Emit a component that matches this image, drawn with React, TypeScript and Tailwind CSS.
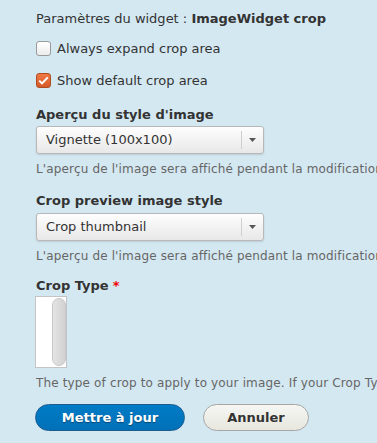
import React from 'react';

const Select: React.FC<{ value: string }> = ({ value }) => (
  <div className="flex h-[28px] w-[228px] items-center rounded-[3px] border border-[#b8b8b8] bg-gradient-to-b from-[#fefefe] to-[#e8e8e8] shadow-[0_1px_2px_rgba(0,0,0,0.12)]">
    <span className="flex-1 pl-[9px] text-[13px] text-[#333]">{value}</span>
    <span className="h-[18px] w-px bg-[#cfcfcf]" />
    <span className="flex w-[21px] justify-center">
      <svg width="7" height="4" viewBox="0 0 7 4">
        <path d="M0 0h7L3.5 4z" fill="#555" />
      </svg>
    </span>
  </div>
);

const Description: React.FC<{ children: React.ReactNode }> = ({ children }) => (
  <p className="mt-[6px] whitespace-nowrap text-[12px] leading-[18px] tracking-[0.15px] text-[#666]">{children}</p>
);

const App: React.FC = () => {
  return (
    <div className="h-[443px] w-[377px] overflow-hidden bg-[#d4e8f2] font-['DejaVu_Sans',sans-serif] text-[#333]">
      <div className="pl-[36px] pt-[9px]">
        <p className="text-[13px]">
          Paramètres du widget : <strong className="font-bold">ImageWidget crop</strong>
        </p>

        <label className="mt-[10px] flex items-center gap-[6px] text-[13px]">
          <span className="h-[15px] w-[15px] rounded-[3px] border border-[#9a9a9a] bg-gradient-to-b from-white to-[#ececec]" />
          Always expand crop area
        </label>

        <label className="mt-[13px] flex items-center gap-[6px] text-[13px]">
          <span className="flex h-[15px] w-[15px] items-center justify-center rounded-[3px] border border-[#b04c1f] bg-gradient-to-b from-[#ef7a43] to-[#d4592a]">
            <svg width="11" height="9" viewBox="0 0 11 9">
              <path d="M1.2 4.6 4 7.4 9.8 1.4" fill="none" stroke="#fff" strokeWidth="2" />
            </svg>
          </span>
          Show default crop area
        </label>

        <h3 className="mt-[14px] text-[13px] font-bold">Aperçu du style d'image</h3>
        <div className="mt-[2px]">
          <Select value="Vignette (100x100)" />
        </div>
        <Description>L'aperçu de l'image sera affiché pendant la modification du contenu.</Description>

        <h3 className="mt-[13px] text-[13px] font-bold">Crop preview image style</h3>
        <div className="mt-[2px]">
          <Select value="Crop thumbnail" />
        </div>
        <Description>L'aperçu de l'image sera affiché pendant la modification du contenu.</Description>

        <h3 className="mt-[11px] flex items-start text-[13px] font-bold">
          Crop Type<span className="ml-[4px] text-[#e00]">*</span>
        </h3>
        <div className="ml-[-1px] mt-[1px] flex h-[72px] w-[32px] border border-[#c4c4c4] bg-white">
          <div className="flex-1" />
          <div className="my-[1px] w-[14px] rounded-full border border-[#c8c8c8] bg-gradient-to-r from-[#e4e4e4] to-[#d2d2d2]" />
        </div>
        <Description>The type of crop to apply to your image. If your Crop Type is not listed, add it first.</Description>

        <div className="ml-[-1px] mt-[12px] flex gap-[18px]">
          <button className="h-[27px] w-[150px] rounded-full border border-[#1e5c90] bg-gradient-to-b from-[#007bc6] to-[#0071b8] text-[13px] font-bold text-white [text-shadow:0_1px_1px_rgba(0,0,0,0.4)]">
            Mettre à jour
          </button>
          <button className="h-[27px] w-[106px] rounded-full border border-[#a6a6a6] bg-gradient-to-b from-[#f6f6f3] to-[#e7e7df] text-[13px] font-bold text-[#333]">
            Annuler
          </button>
        </div>
      </div>
    </div>
  );
};

export default App;
